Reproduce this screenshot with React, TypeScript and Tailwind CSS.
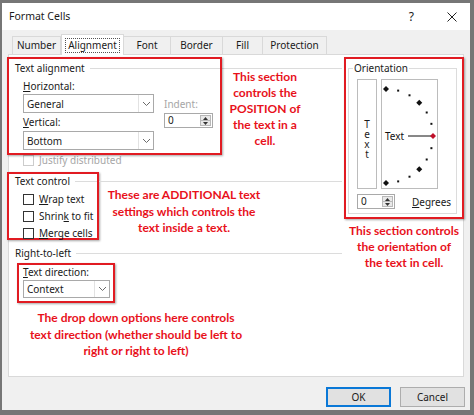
import React from "react"

function Chevron() {
  return (
    <svg width="9" height="6" viewBox="0 0 9 6">
      <path d="M1 1l3.5 3.5L8 1" fill="none" stroke="#6b6b6b" strokeWidth="1" />
    </svg>
  )
}

function Combo({ value, w, h, className = "" }: { value: string; w: string; h: string; className?: string }) {
  return (
    <div className={`${w} ${h} ${className} flex items-center border border-[#a9a9a9] bg-white`}>
      <span className="flex-1 pl-[3px] leading-none">{value}</span>
      <span className="w-[15px] h-full flex items-center justify-center border-l border-[#e2e2e2]">
        <Chevron />
      </span>
    </div>
  )
}

function Spin({ w, className = "" }: { w: string; className?: string }) {
  return (
    <div className={`${w} ${className} h-[15px] flex border border-[#a9a9a9] bg-white`}>
      <span className="flex-1 pl-[3px] leading-[13px]">0</span>
      <span className="w-[11px] my-px mr-px flex flex-col border border-[#b8b8b8] bg-[#e8e8e8]">
        <span className="flex-1 flex items-center justify-center border-b border-[#b8b8b8]">
          <svg width="5" height="3" viewBox="0 0 5 3">
            <path d="M0 3L2.5 0L5 3z" fill="#333" />
          </svg>
        </span>
        <span className="flex-1 flex items-center justify-center">
          <svg width="5" height="3" viewBox="0 0 5 3">
            <path d="M0 0L2.5 3L5 0z" fill="#333" />
          </svg>
        </span>
      </span>
    </div>
  )
}

function GroupHead({ children }: { children: React.ReactNode }) {
  return (
    <div className="flex items-center h-[14px]">
      <span className="leading-none">{children}</span>
      <span className="flex-1 h-px ml-[5px] bg-[#dcdcdc]" />
    </div>
  )
}

function Check({ children, disabled }: { children: React.ReactNode; disabled?: boolean }) {
  return (
    <div className="flex items-center h-[12px]">
      <span
        className={`w-[11px] h-[11px] border bg-white ${disabled ? "border-[#cccccc]" : "border-[#333333]"}`}
      />
      <span className={`ml-[5px] leading-none ${disabled ? "text-[#a6a6a6]" : ""}`}>{children}</span>
    </div>
  )
}

function Arc() {
  const cx = 4
  const cy = 56
  const r = 47
  const big = [45, 90, -45, -90]
  const small = [15, 30, 60, 75, -15, -30, -60, -75]
  const pt = (a: number) => {
    const t = (a * Math.PI) / 180
    return [cx + r * Math.cos(t), cy - r * Math.sin(t)]
  }
  return (
    <svg width="55" height="108" viewBox="0 0 55 108">
      {small.map((a) => {
        const [x, y] = pt(a)
        return <rect key={a} x={x - 1} y={y - 1} width="2" height="2" fill="#111" />
      })}
      {big.map((a) => {
        const [x, y] = pt(a)
        return (
          <polygon
            key={a}
            points={`${x},${y - 3} ${x + 3},${y} ${x},${y + 3} ${x - 3},${y}`}
            fill="#111"
          />
        )
      })}
      <text x="3" y="60" fontSize="10" fontFamily="Noto Sans, sans-serif" fill="#111">
        Text
      </text>
      <line x1="26" y1="56" x2="49" y2="56" stroke="#111" strokeWidth="1" />
      <polygon points="51,53 54,56 51,59 48,56" fill="#c0102a" />
    </svg>
  )
}

const redBox = "border-2 border-[#e11b22] shadow-[1px_1px_2px_rgba(0,0,0,0.35)]"
const note = "font-['Lato',sans-serif] font-bold text-[12px] text-[#e8111b] text-center whitespace-nowrap"

export default function App() {
  return (
    <div className="w-[474px] h-[415px] bg-[#767676] pt-[3px] pl-[2px] pr-[4px] pb-[5px] font-['Noto_Sans',sans-serif] text-[10px] text-[#1a1a1a]">
      <div className="h-full flex flex-col bg-[#f0f0f0]">
        {/* title bar */}
        <div className="h-[27px] bg-white flex items-center pl-[7px] pr-[13px]">
          <span className="text-[10.5px]">Format Cells</span>
          <span className="ml-auto text-[12px]">?</span>
          <svg className="ml-[33px]" width="10" height="10" viewBox="0 0 10 10">
            <path d="M0.5 0.5L9.5 9.5M9.5 0.5L0.5 9.5" stroke="#222" strokeWidth="1" />
          </svg>
        </div>

        {/* tabs */}
        <div className="h-[24px] flex items-end pl-[10px]">
          <div className="w-[49px] h-[18px] flex items-center justify-center border border-b-0 border-[#d9d9d9]">Number</div>
          <div className="relative z-10 w-[63px] h-[21px] -mb-px flex items-center justify-center border border-b-0 border-[#d9d9d9] bg-white">
            <span className="px-[2px] leading-[13px] border border-dotted border-[#555]">Alignment</span>
          </div>
          <div className="w-[47px] h-[18px] flex items-center justify-center border border-b-0 border-l-0 border-[#d9d9d9]">Font</div>
          <div className="w-[52px] h-[18px] flex items-center justify-center border border-b-0 border-l-0 border-[#d9d9d9]">Border</div>
          <div className="w-[40px] h-[18px] flex items-center justify-center border border-b-0 border-l-0 border-[#d9d9d9]">Fill</div>
          <div className="w-[64px] h-[18px] flex items-center justify-center border border-b-0 border-l-0 border-[#d9d9d9]">Protection</div>
        </div>

        {/* panel */}
        <div className="mx-[6px] h-[323px] bg-white border border-[#d9d9d9] flex">
          <div className="w-[335px] flex flex-col">
            {/* text alignment */}
            <div className="flex mt-[2px] -ml-[2px]">
              <div className={`relative z-10 w-[215px] h-[98px] ${redBox} flex flex-col`}>
                <div className="mt-[2px] pl-[6px]">
                  <GroupHead>Text alignment</GroupHead>
                </div>
                <div className="flex pl-[14px] mt-[4px]">
                  <div className="flex flex-col">
                    <span className="h-[14px] leading-[14px]"><u>H</u>orizontal:</span>
                    <Combo value="General" w="w-[131px]" h="h-[19px]" className="mt-px" />
                    <span className="h-[14px] leading-[14px] mt-[2px]"><u>V</u>ertical:</span>
                    <Combo value="Bottom" w="w-[131px]" h="h-[19px]" className="mt-[2px]" />
                  </div>
                  <div className="ml-[10px] flex flex-col pt-[18px]">
                    <span className="h-[14px] leading-[14px] text-[#a6a6a6]">Indent:</span>
                    <Spin w="w-[49px]" className="mt-[2px]" />
                  </div>
                </div>
              </div>
              <div className="flex flex-col flex-1 pr-[2px]">
                <span className="mt-[11px] h-px bg-[#dcdcdc]" />
                <div className={`w-[86px] ${note} leading-[16px]`}>
                  This section
                  <br />
                  controls the
                  <br />
                  POSITION of
                  <br />
                  the text in a
                  <br />
                  cell.
                </div>
              </div>
            </div>

            <div className="-mt-px pl-[14px]">
              <Check disabled>Justify distributed</Check>
            </div>

            {/* text control */}
            <div className="flex mt-[6px] -ml-[2px]">
              <div className={`w-[92px] h-[68px] ${redBox} flex flex-col`}>
                <div className="pl-[6px]">
                  <GroupHead>Text control</GroupHead>
                </div>
                <div className="flex flex-col gap-[5px] pl-[14px] mt-[5px]">
                  <Check><u>W</u>rap text</Check>
                  <Check>Shrin<u>k</u> to fit</Check>
                  <Check><u>M</u>erge cells</Check>
                </div>
              </div>
              <div className="flex flex-col flex-1 pr-[2px]">
                <span className="mt-[9px] h-px bg-[#dcdcdc]" />
                <div className={`mt-[5px] ml-[5px] w-[160px] ${note} leading-[16.5px]`}>
                  These are ADDITIONAL text
                  <br />
                  settings which controls the
                  <br />
                  text inside a text.
                </div>
              </div>
            </div>

            {/* right-to-left */}
            <div className="mt-[6px] pl-[6px] pr-[2px]">
              <GroupHead>Right-to-left</GroupHead>
            </div>
            <div className={`mt-[3px] ml-[8px] w-[98px] h-[40px] ${redBox} flex flex-col pl-[4px]`}>
              <span className="h-[14px] leading-[14px]"><u>T</u>ext direction:</span>
              <Combo value="Context" w="w-[87px]" h="h-[18px]" className="mt-px" />
            </div>
            <div className={`mt-[7px] w-[254px] ${note} leading-[16.5px]`}>
              The drop down options here controls
              <br />
              text direction (whether should be left to
              <br />
              right or right to left)
            </div>
          </div>

          {/* orientation */}
          <div className="w-[120px] -mr-px mt-[2px] flex flex-col">
            <div className={`h-[162px] ${redBox}`}>
              <fieldset className="ml-[2px] mt-[2px] w-[109px] h-[153px] border border-[#dcdcdc]">
                <legend className="ml-[4px] px-px leading-[14px]">Orientation</legend>
                <div className="flex mt-[4px] ml-[8px] gap-[4px]">
                  <div className="w-[20px] h-[110px] border border-[#bcbcbc] flex items-center justify-center pt-[10px]">
                    <span className="block w-[7px] break-all text-center leading-[10px]">Text</span>
                  </div>
                  <div className="w-[57px] h-[110px] border border-[#bcbcbc]">
                    <Arc />
                  </div>
                </div>
                <div className="flex items-center mt-[5px] ml-[8px]">
                  <Spin w="w-[38px]" />
                  <span className="ml-[17px] leading-none"><u>D</u>egrees</span>
                </div>
              </fieldset>
            </div>
            <div className={`mt-[4px] ${note} leading-[16px]`}>
              This section controls
              <br />
              the orientation of
              <br />
              the text in cell.
            </div>
          </div>
        </div>

        {/* buttons */}
        <div className="mt-[10px] flex justify-end gap-[9px] pr-[5px]">
          <div className="w-[65px] h-[20px] flex items-center justify-center border-2 border-[#0a78d7] bg-[#e1e1e1]">OK</div>
          <div className="w-[65px] h-[20px] flex items-center justify-center border border-[#adadad] bg-[#e1e1e1]">Cancel</div>
        </div>
      </div>
    </div>
  )
}
